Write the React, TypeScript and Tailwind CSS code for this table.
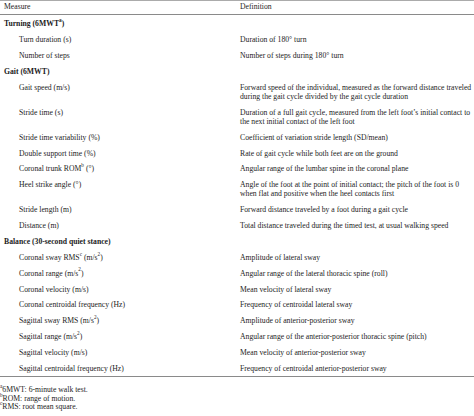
import React from "react";

type Row =
  | { kind: "section"; label: React.ReactNode }
  | { kind: "item"; label: React.ReactNode; def: React.ReactNode };

const Sup = ({ children }: { children: React.ReactNode }) => (
  <sup className="relative -top-[0.8em] align-baseline text-[0.68em] leading-none">{children}</sup>
);

const rows: Row[] = [
  { kind: "section", label: <>Turning (6MWT<Sup>a</Sup>)</> },
  { kind: "item", label: "Turn duration (s)", def: "Duration of 180° turn" },
  { kind: "item", label: "Number of steps", def: "Number of steps during 180° turn" },
  { kind: "section", label: "Gait (6MWT)" },
  {
    kind: "item",
    label: "Gait speed (m/s)",
    def: "Forward speed of the individual, measured as the forward distance traveled during the gait cycle divided by the gait cycle duration",
  },
  {
    kind: "item",
    label: "Stride time (s)",
    def: "Duration of a full gait cycle, measured from the left foot’s initial contact to the next initial contact of the left foot",
  },
  { kind: "item", label: "Stride time variability (%)", def: "Coefficient of variation stride length (SD/mean)" },
  { kind: "item", label: "Double support time (%)", def: "Rate of gait cycle while both feet are on the ground" },
  {
    kind: "item",
    label: <>Coronal trunk ROM<Sup>b</Sup> (°)</>,
    def: "Angular range of the lumbar spine in the coronal plane",
  },
  {
    kind: "item",
    label: "Heel strike angle (°)",
    def: "Angle of the foot at the point of initial contact; the pitch of the foot is 0 when flat and positive when the heel contacts first",
  },
  { kind: "item", label: "Stride length (m)", def: "Forward distance traveled by a foot during a gait cycle" },
  {
    kind: "item",
    label: "Distance (m)",
    def: "Total distance traveled during the timed test, at usual walking speed",
  },
  { kind: "section", label: "Balance (30-second quiet stance)" },
  {
    kind: "item",
    label: <>Coronal sway RMS<Sup>c</Sup> (m/s<Sup>2</Sup>)</>,
    def: "Amplitude of lateral sway",
  },
  {
    kind: "item",
    label: <>Coronal range (m/s<Sup>2</Sup>)</>,
    def: "Angular range of the lateral thoracic spine (roll)",
  },
  { kind: "item", label: "Coronal velocity (m/s)", def: "Mean velocity of lateral sway" },
  { kind: "item", label: "Coronal centroidal frequency (Hz)", def: "Frequency of centroidal lateral sway" },
  {
    kind: "item",
    label: <>Sagittal sway RMS (m/s<Sup>2</Sup>)</>,
    def: "Amplitude of anterior-posterior sway",
  },
  {
    kind: "item",
    label: <>Sagittal range (m/s<Sup>2</Sup>)</>,
    def: "Angular range of the anterior-posterior thoracic spine (pitch)",
  },
  { kind: "item", label: "Sagittal velocity (m/s)", def: "Mean velocity of anterior-posterior sway" },
  {
    kind: "item",
    label: "Sagittal centroidal frequency (Hz)",
    def: "Frequency of centroidal anterior-posterior sway",
  },
];

const notes: [string, string][] = [
  ["a", "6MWT: 6-minute walk test."],
  ["b", "ROM: range of motion."],
  ["c", "RMS: root mean square."],
];

export default function App() {
  return (
    <div
      className="h-[416px] w-[474px] overflow-hidden bg-white text-[7.7px] leading-[9px] text-[#1c1c1c]"
      style={{ fontFamily: '"Liberation Serif", "Times New Roman", serif' }}
    >
      <div className="border-t-[1.5px] border-b-[1.5px] border-[#ababab] border-b-[#8a8a8a]">
        <div className="flex pt-[1.3px] pb-[2.7px]">
          <div className="w-[240px] pl-[4px]">Measure</div>
          <div className="flex-1">Definition</div>
        </div>
      </div>

      <div className="border-b-[1.5px] border-[#8a8a8a] pt-[1px]">
        {rows.map((r, i) =>
          r.kind === "section" ? (
            <div key={i} className="py-[3.45px] pl-[4px] font-bold">
              {r.label}
            </div>
          ) : (
            <div key={i} className="flex py-[3.45px]">
              <div className="w-[240px] shrink-0 pl-[19px]">{r.label}</div>
              <div className="flex-1 pr-[2px]">{r.def}</div>
            </div>
          )
        )}
      </div>

      <div className="pt-[9px]">
        {notes.map(([k, t]) => (
          <div key={k} className="leading-[8.5px]">
            <Sup>{k}</Sup>
            {t}
          </div>
        ))}
      </div>
    </div>
  );
}
